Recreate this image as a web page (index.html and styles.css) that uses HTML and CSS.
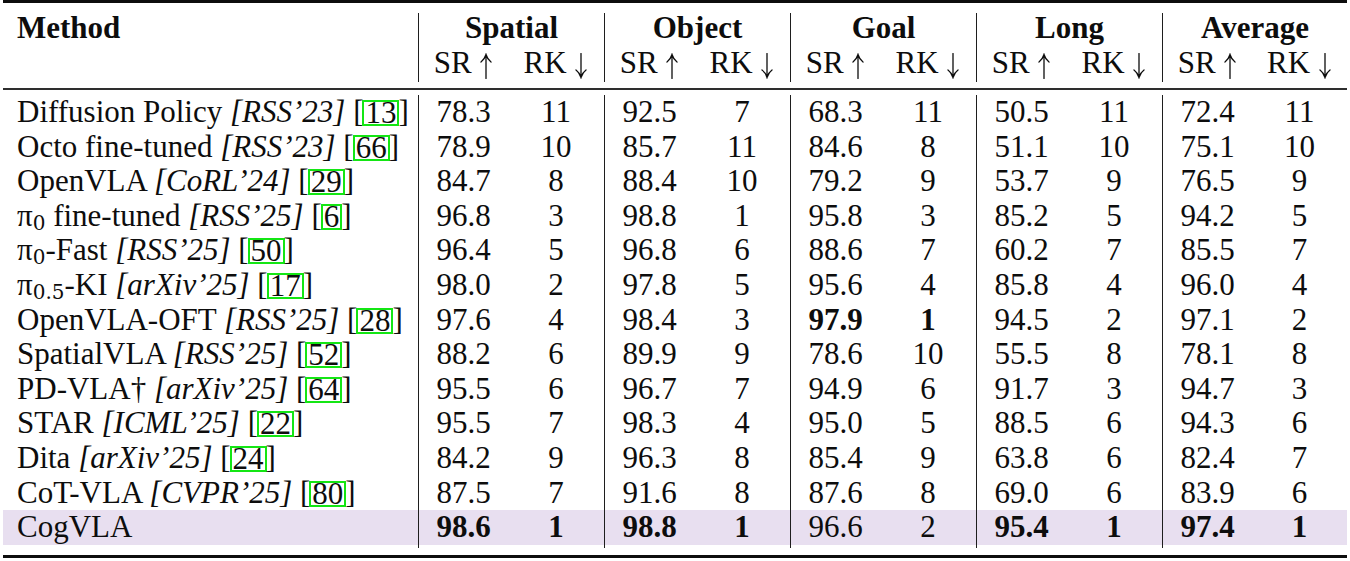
FILE: index.html
```html
<!DOCTYPE html>
<html lang="en">
<head>
<meta charset="utf-8">
<title>LIBERO results</title>
<link rel="stylesheet" href="styles.css">
</head>
<body>
<div class="tbl">
  <div class="rule thick"></div>
  <div class="head">
    <div class="row">
      <div class="c method b">Method</div>
      <div class="c grp sep b">Spatial</div>
      <div class="c grp sep b">Object</div>
      <div class="c grp sep b">Goal</div>
      <div class="c grp sep b">Long</div>
      <div class="c grp sep b">Average</div>
    </div>
    <div class="row">
      <div class="c method"></div>
      <div class="c sep">SR <svg class="arr" viewBox="0 0 14 26" aria-label="↑"><path d="M7 2.5V25.5M2 9Q5.5 6.5 7 1.5Q8.5 6.5 12 9"/></svg></div><div class="c">RK <svg class="arr" viewBox="0 0 14 26" aria-label="↓"><path d="M7 0.5V23.5M2 17Q5.5 19.5 7 24.5Q8.5 19.5 12 17"/></svg></div>
      <div class="c sep">SR <svg class="arr" viewBox="0 0 14 26" aria-label="↑"><path d="M7 2.5V25.5M2 9Q5.5 6.5 7 1.5Q8.5 6.5 12 9"/></svg></div><div class="c">RK <svg class="arr" viewBox="0 0 14 26" aria-label="↓"><path d="M7 0.5V23.5M2 17Q5.5 19.5 7 24.5Q8.5 19.5 12 17"/></svg></div>
      <div class="c sep">SR <svg class="arr" viewBox="0 0 14 26" aria-label="↑"><path d="M7 2.5V25.5M2 9Q5.5 6.5 7 1.5Q8.5 6.5 12 9"/></svg></div><div class="c">RK <svg class="arr" viewBox="0 0 14 26" aria-label="↓"><path d="M7 0.5V23.5M2 17Q5.5 19.5 7 24.5Q8.5 19.5 12 17"/></svg></div>
      <div class="c sep">SR <svg class="arr" viewBox="0 0 14 26" aria-label="↑"><path d="M7 2.5V25.5M2 9Q5.5 6.5 7 1.5Q8.5 6.5 12 9"/></svg></div><div class="c">RK <svg class="arr" viewBox="0 0 14 26" aria-label="↓"><path d="M7 0.5V23.5M2 17Q5.5 19.5 7 24.5Q8.5 19.5 12 17"/></svg></div>
      <div class="c sep">SR <svg class="arr" viewBox="0 0 14 26" aria-label="↑"><path d="M7 2.5V25.5M2 9Q5.5 6.5 7 1.5Q8.5 6.5 12 9"/></svg></div><div class="c">RK <svg class="arr" viewBox="0 0 14 26" aria-label="↓"><path d="M7 0.5V23.5M2 17Q5.5 19.5 7 24.5Q8.5 19.5 12 17"/></svg></div>
    </div>
  </div>
  <div class="rule mid"></div>
  <div class="body">
    <div class="row">
      <div class="c method">Diffusion Policy <i>[RSS’23]</i> [<span class="cite">13</span>]</div>
      <div class="c sep">78.3</div><div class="c">11</div>
      <div class="c sep">92.5</div><div class="c">7</div>
      <div class="c sep">68.3</div><div class="c">11</div>
      <div class="c sep">50.5</div><div class="c">11</div>
      <div class="c sep">72.4</div><div class="c">11</div>
    </div>
    <div class="row">
      <div class="c method">Octo fine-tuned <i>[RSS’23]</i> [<span class="cite">66</span>]</div>
      <div class="c sep">78.9</div><div class="c">10</div>
      <div class="c sep">85.7</div><div class="c">11</div>
      <div class="c sep">84.6</div><div class="c">8</div>
      <div class="c sep">51.1</div><div class="c">10</div>
      <div class="c sep">75.1</div><div class="c">10</div>
    </div>
    <div class="row">
      <div class="c method">OpenVLA <i>[CoRL’24]</i> [<span class="cite">29</span>]</div>
      <div class="c sep">84.7</div><div class="c">8</div>
      <div class="c sep">88.4</div><div class="c">10</div>
      <div class="c sep">79.2</div><div class="c">9</div>
      <div class="c sep">53.7</div><div class="c">9</div>
      <div class="c sep">76.5</div><div class="c">9</div>
    </div>
    <div class="row">
      <div class="c method"><span class="pi">π</span><sub class="sb">0</sub> fine-tuned <i>[RSS’25]</i> [<span class="cite">6</span>]</div>
      <div class="c sep">96.8</div><div class="c">3</div>
      <div class="c sep">98.8</div><div class="c">1</div>
      <div class="c sep">95.8</div><div class="c">3</div>
      <div class="c sep">85.2</div><div class="c">5</div>
      <div class="c sep">94.2</div><div class="c">5</div>
    </div>
    <div class="row">
      <div class="c method"><span class="pi">π</span><sub class="sb">0</sub>-Fast <i>[RSS’25]</i> [<span class="cite">50</span>]</div>
      <div class="c sep">96.4</div><div class="c">5</div>
      <div class="c sep">96.8</div><div class="c">6</div>
      <div class="c sep">88.6</div><div class="c">7</div>
      <div class="c sep">60.2</div><div class="c">7</div>
      <div class="c sep">85.5</div><div class="c">7</div>
    </div>
    <div class="row">
      <div class="c method"><span class="pi">π</span><sub class="sb">0.5</sub>-KI <i>[arXiv’25]</i> [<span class="cite">17</span>]</div>
      <div class="c sep">98.0</div><div class="c">2</div>
      <div class="c sep">97.8</div><div class="c">5</div>
      <div class="c sep">95.6</div><div class="c">4</div>
      <div class="c sep">85.8</div><div class="c">4</div>
      <div class="c sep">96.0</div><div class="c">4</div>
    </div>
    <div class="row">
      <div class="c method">OpenVLA-OFT <i>[RSS’25]</i> [<span class="cite">28</span>]</div>
      <div class="c sep">97.6</div><div class="c">4</div>
      <div class="c sep">98.4</div><div class="c">3</div>
      <div class="c sep b">97.9</div><div class="c b">1</div>
      <div class="c sep">94.5</div><div class="c">2</div>
      <div class="c sep">97.1</div><div class="c">2</div>
    </div>
    <div class="row">
      <div class="c method">SpatialVLA <i>[RSS’25]</i> [<span class="cite">52</span>]</div>
      <div class="c sep">88.2</div><div class="c">6</div>
      <div class="c sep">89.9</div><div class="c">9</div>
      <div class="c sep">78.6</div><div class="c">10</div>
      <div class="c sep">55.5</div><div class="c">8</div>
      <div class="c sep">78.1</div><div class="c">8</div>
    </div>
    <div class="row">
      <div class="c method">PD-VLA† <i>[arXiv’25]</i> [<span class="cite">64</span>]</div>
      <div class="c sep">95.5</div><div class="c">6</div>
      <div class="c sep">96.7</div><div class="c">7</div>
      <div class="c sep">94.9</div><div class="c">6</div>
      <div class="c sep">91.7</div><div class="c">3</div>
      <div class="c sep">94.7</div><div class="c">3</div>
    </div>
    <div class="row">
      <div class="c method">STAR <i>[ICML’25]</i> [<span class="cite">22</span>]</div>
      <div class="c sep">95.5</div><div class="c">7</div>
      <div class="c sep">98.3</div><div class="c">4</div>
      <div class="c sep">95.0</div><div class="c">5</div>
      <div class="c sep">88.5</div><div class="c">6</div>
      <div class="c sep">94.3</div><div class="c">6</div>
    </div>
    <div class="row">
      <div class="c method">Dita <i>[arXiv’25]</i> [<span class="cite">24</span>]</div>
      <div class="c sep">84.2</div><div class="c">9</div>
      <div class="c sep">96.3</div><div class="c">8</div>
      <div class="c sep">85.4</div><div class="c">9</div>
      <div class="c sep">63.8</div><div class="c">6</div>
      <div class="c sep">82.4</div><div class="c">7</div>
    </div>
    <div class="row">
      <div class="c method">CoT-VLA <i>[CVPR’25]</i> [<span class="cite">80</span>]</div>
      <div class="c sep">87.5</div><div class="c">7</div>
      <div class="c sep">91.6</div><div class="c">8</div>
      <div class="c sep">87.6</div><div class="c">8</div>
      <div class="c sep">69.0</div><div class="c">6</div>
      <div class="c sep">83.9</div><div class="c">6</div>
    </div>
    <div class="row ours">
      <div class="c method">CogVLA</div>
      <div class="c sep b">98.6</div><div class="c b">1</div>
      <div class="c sep b">98.8</div><div class="c b">1</div>
      <div class="c sep">96.6</div><div class="c">2</div>
      <div class="c sep b">95.4</div><div class="c b">1</div>
      <div class="c sep b">97.4</div><div class="c b">1</div>
    </div>
    <div class="row tail">
      <div class="c method"></div>
      <div class="c sep"></div><div class="c"></div>
      <div class="c sep"></div><div class="c"></div>
      <div class="c sep"></div><div class="c"></div>
      <div class="c sep"></div><div class="c"></div>
      <div class="c sep"></div><div class="c"></div>
    </div>
  </div>
  <div class="rule thick bottom"></div>
</div>
</body>
</html>
```

FILE: styles.css
```css
html, body {
  margin: 0;
  padding: 0;
  background: #ffffff;
}

body {
  font-family: "Liberation Serif", "Times New Roman", serif;
  font-size: 31px;
  color: #0d0d0d;
}

.tbl {
  width: 1344px;
  margin-left: 3px;
  display: flex;
  flex-direction: column;
}

.rule {
  background: #0d0d0d;
}

.rule.thick {
  height: 3px;
}

.rule.mid {
  height: 2px;
  background: #2e2e2e;
  margin-top: 6px;
}

.rule.bottom {
  margin-top: 7px;
}

.head {
  padding-top: 10px;
  display: flex;
  flex-direction: column;
}

.body {
  margin-top: 5px;
  display: flex;
  flex-direction: column;
}

.row {
  display: grid;
  grid-template-columns: 415px 90px 96px 90px 96px 90px 96px 90px 96px 90px 95px;
  height: 34.6px;
  line-height: 34.6px;
}

.head .row {
  height: 34.5px;
  line-height: 30px;
}

.row.tail {
  height: 3px;
}

.row.ours {
  background: #e8dff0;
}

.c {
  text-align: center;
  white-space: nowrap;
}

.c.method {
  text-align: left;
  padding-left: 14px;
}

.c.grp {
  grid-column: span 2;
}

.c.sep {
  border-left: 1.5px solid #1e1e1e;
}

.b {
  font-weight: bold;
}

.arr {
  width: 14px;
  height: 26px;
  vertical-align: -6px;
  fill: none;
  stroke: #0d0d0d;
  stroke-width: 1.3;
  stroke-linecap: round;
}

.cite {
  display: inline-block;
  border: 2px solid #14e614;
  line-height: 22px;
  padding: 0 1px;
  margin: 0 -1px;
  vertical-align: -1px;
}

.sb {
  font-size: 20px;
  vertical-align: -4px;
  line-height: 0;
  font-family: "DejaVu Serif", "Liberation Serif", serif;
}

.pi {
  font-style: normal;
}
```
